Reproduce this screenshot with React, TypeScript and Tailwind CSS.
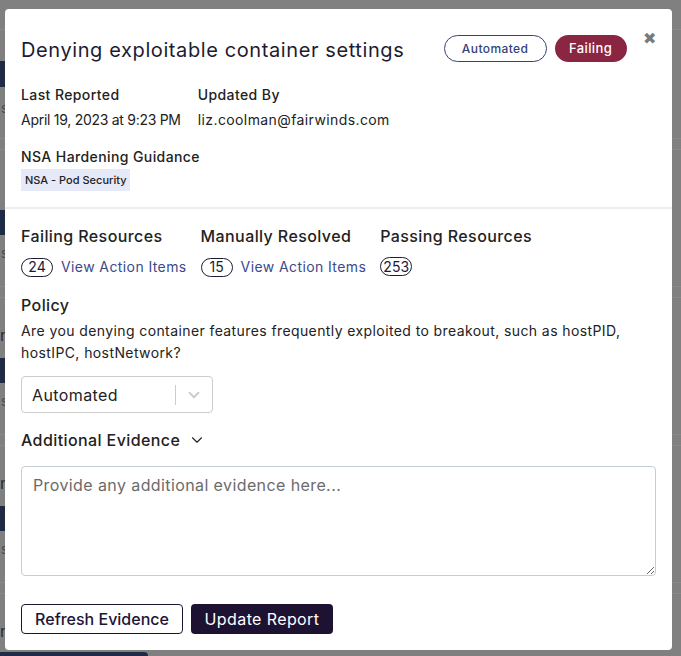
import React from "react";
import { ChevronDown } from "lucide-react";

function BgLine() {
  return <div className="h-px w-full bg-[#898989]" />;
}

function BgCard({ showN = true, showS = true }: { showN?: boolean; showS?: boolean }) {
  return (
    <div className="flex h-[148px] flex-col">
      <BgLine />
      <div className="h-[10px]" />
      <BgLine />
      <div className="mt-[27px] h-[20px] text-[16px] leading-[20px] text-[#2a2a2a]">
        {showN ? <span className="ml-[0px]">n</span> : null}
      </div>
      {showS ? (
        <>
          <div className="mt-[13px] h-[25px] w-[60px] bg-[#1f2a44]" />
          <div className="mt-[8px] h-[20px] text-[14px] leading-[20px] text-[#4a4a4a]">
            <span className="ml-[1px]">s</span>
          </div>
        </>
      ) : null}
    </div>
  );
}

function CountPill({ n }: { n: string }) {
  return (
    <span className="inline-flex h-[19px] w-[32px] items-center justify-center rounded-full border border-[#1e1b34] text-[14px] leading-none tracking-normal text-[#1e1b34]">
      {n}
    </span>
  );
}

function Stat({ label, count, link }: { label: string; count: string; link?: boolean }) {
  return (
    <div className="flex flex-col">
      <div className="text-[16px] font-medium leading-[24px] text-[#222]">{label}</div>
      <div className="mt-[9px] flex items-center gap-2">
        <CountPill n={count} />
        {link ? <span className="text-[14px] leading-[20px] text-[#3b4a8a]">View Action Items</span> : null}
      </div>
    </div>
  );
}

export default function App() {
  return (
    <div className="relative h-[656px] w-[681px] overflow-hidden bg-[#808080] font-['Inter',sans-serif] tracking-[0.025em]">
      {/* page behind the overlay */}
      <div className="flex flex-col">
        <div className="h-[29px]" />
        <BgLine />
        <div className="mt-[31px] h-[26px] w-[60px] bg-[#1f2a44]" />
        <div className="mt-[11px] h-[20px] text-[14px] leading-[20px] text-[#4a4a4a]">
          <span className="ml-[1px]">s</span>
        </div>
        <div className="h-[20px]" />
        <BgCard showN={false} />
        <BgCard />
        <BgCard />
        <BgCard showS={false} />
      </div>
      <div className="absolute bottom-0 left-0 h-[4px] w-[148px] rounded-tr bg-[#1f2a44]" />

      {/* modal */}
      <div className="absolute left-[5px] top-[9px] flex h-[641px] w-[667px] flex-col rounded-[4px] bg-white">
        <div className="px-4 pt-[26px]">
          <div className="flex items-start">
            <h1 className="text-[20px] font-normal leading-[30px] tracking-[0.03em] text-[#1e1b34]">
              Denying exploitable container settings
            </h1>
            <div className="flex-1" />
            <span className="flex h-[27px] w-[103px] items-center justify-center rounded-full border border-[#34427a] text-[12px] font-medium text-[#34427a]">
              Automated
            </span>
            <span className="ml-2 flex h-[27px] w-[72px] items-center justify-center rounded-full bg-[#8b2642] text-[13px] font-medium text-white">
              Failing
            </span>
            <span className="-mt-[7px] ml-4 text-[16px] leading-[20px] text-[#7a7a7a]">✖</span>
          </div>

          <div className="mt-[20px] flex gap-[17px]">
            <div className="flex flex-col">
              <div className="whitespace-nowrap text-[14px] font-medium leading-[20px] text-[#222]">Last Reported</div>
              <div className="mt-[5px] whitespace-nowrap text-[14px] leading-[20px] tracking-[-0.02em] text-[#222]">April 19, 2023 at 9:23 PM</div>
            </div>
            <div className="flex flex-col">
              <div className="text-[14px] font-medium leading-[20px] text-[#222]">Updated By</div>
              <div className="mt-[5px] text-[14px] leading-[20px] text-[#222]">liz.coolman@fairwinds.com</div>
            </div>
          </div>

          <div className="mt-[17px] text-[14px] font-medium leading-[20px] text-[#222]">NSA Hardening Guidance</div>
          <div className="mt-[2px] flex">
            <span className="flex h-[22px] items-center bg-[#e6e9f7] px-[4px] text-[11px] font-medium tracking-normal text-[#222]">
              NSA - Pod Security
            </span>
          </div>
        </div>

        <div className="mt-[16px] h-[2px] w-full bg-[#eeeeee]" />

        <div className="flex flex-col px-4 pt-[15px]">
          <div className="flex gap-[14px]">
            <Stat label="Failing Resources" count="24" link />
            <Stat label="Manually Resolved" count="15" link />
            <Stat label="Passing Resources" count="253" />
          </div>

          <div className="mt-[16px] text-[16px] font-medium leading-[24px] text-[#222]">Policy</div>
          <p className="mt-[3px] pr-[30px] text-[14px] leading-[22px] text-[#222]">
            Are you denying container features frequently exploited to breakout, such as hostPID, hostIPC, hostNetwork?
          </p>

          <div className="mt-[12px] flex h-[37px] w-[192px] items-center rounded-[4px] border border-[#cccccc]">
            <span className="flex-1 pl-[10px] text-[16px] text-[#222]">Automated</span>
            <span className="h-[20px] w-px bg-[#cccccc]" />
            <span className="flex w-[36px] items-center justify-center text-[#cccccc]">
              <ChevronDown size={18} strokeWidth={2.5} />
            </span>
          </div>

          <div className="mt-[15px] flex items-center gap-[8px]">
            <span className="text-[16px] font-medium leading-[24px] text-[#222]">Additional Evidence</span>
            <ChevronDown size={18} strokeWidth={1.5} className="text-[#222]" />
          </div>

          <textarea
            className="mt-[14px] h-[110px] w-full rounded-[4px] border border-[#c5ccd6] px-[11px] py-[6px] text-[16px] leading-[24px] tracking-[0.025em] text-[#222] placeholder:text-[#6b6b6b] focus:outline-none"
            placeholder="Provide any additional evidence here..."
          />

          <div className="mt-[28px] flex gap-2">
            <button className="flex h-[30px] w-[162px] items-center justify-center rounded-[4px] border border-[#1e1535] bg-white text-[16px] font-medium tracking-normal text-[#1e1535]">
              Refresh Evidence
            </button>
            <button className="flex h-[30px] w-[142px] items-center justify-center rounded-[4px] bg-[#1e1233] text-[16px] tracking-[0.025em] text-white">
              Update Report
            </button>
          </div>
        </div>
      </div>
    </div>
  );
}
